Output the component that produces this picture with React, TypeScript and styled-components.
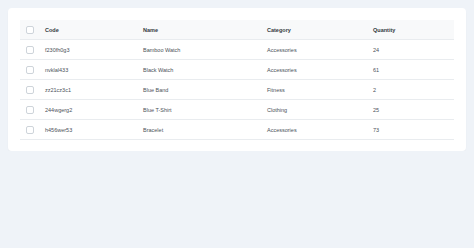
import React, { useState } from 'react'
import styled, { createGlobalStyle } from 'styled-components'

const GlobalStyle = createGlobalStyle`
  html, body {
    margin: 0;
    padding: 0;
    background: #eff3f8;
  }
  body {
    font-family: 'Liberation Sans', Arial, sans-serif;
    -webkit-font-smoothing: antialiased;
  }
`

const Page = styled.div`
  padding: 8px 8px 0 8px;
  width: 474px;
  box-sizing: border-box;
`

const Card = styled.div`
  background: #ffffff;
  border-radius: 4px;
  padding: 12px 12px 11px 12px;
  width: 458px;
  box-sizing: border-box;
  box-shadow: 0 1px 2px rgba(0, 0, 0, 0.03);
`

const Table = styled.table`
  width: 100%;
  border-collapse: collapse;
  table-layout: fixed;
  font-size: 5.5px;
`

const HeadCell = styled.th`
  background: #f8f9fa;
  color: #343a40;
  font-weight: 700;
  text-align: left;
  height: 19px;
  padding: 0 0 0 6px;
  border-bottom: 1px solid #e9ecef;
`

const Cell = styled.td`
  color: #4b5259;
  height: 19px;
  padding: 0 0 0 6px;
  border-bottom: 1px solid #e9ecef;
`

const Box = styled.span<{ $checked?: boolean }>`
  display: block;
  width: 8px;
  height: 8px;
  box-sizing: border-box;
  border: 1px solid #ced4da;
  border-radius: 2px;
  background: ${({ $checked }) => ($checked ? '#6366f1' : '#ffffff')};
  cursor: pointer;
`

type Product = {
  code: string
  name: string
  category: string
  quantity: number
}

const products: Product[] = [
  { code: 'f230fh0g3', name: 'Bamboo Watch', category: 'Accessories', quantity: 24 },
  { code: 'nvklal433', name: 'Black Watch', category: 'Accessories', quantity: 61 },
  { code: 'zz21cz3c1', name: 'Blue Band', category: 'Fitness', quantity: 2 },
  { code: '244wgerg2', name: 'Blue T-Shirt', category: 'Clothing', quantity: 25 },
  { code: 'h456wer53', name: 'Bracelet', category: 'Accessories', quantity: 73 },
]

const App = () => {
  const [selected, setSelected] = useState<string[]>([])

  const toggle = (code: string) => {
    setSelected((prev) => (prev.includes(code) ? prev.filter((c) => c !== code) : [...prev, code]))
  }

  const allSelected = selected.length === products.length

  return (
    <Page>
      <GlobalStyle />
      <Card>
        <Table>
          <colgroup>
            <col style={{ width: 19 }} />
            <col style={{ width: 98 }} />
            <col style={{ width: 124 }} />
            <col style={{ width: 106 }} />
            <col />
          </colgroup>
          <thead>
            <tr>
              <HeadCell>
                <Box
                  $checked={allSelected}
                  onClick={() => setSelected(allSelected ? [] : products.map((p) => p.code))}
                />
              </HeadCell>
              <HeadCell>Code</HeadCell>
              <HeadCell>Name</HeadCell>
              <HeadCell>Category</HeadCell>
              <HeadCell>Quantity</HeadCell>
            </tr>
          </thead>
          <tbody>
            {products.map((product) => (
              <tr key={product.code}>
                <Cell>
                  <Box $checked={selected.includes(product.code)} onClick={() => toggle(product.code)} />
                </Cell>
                <Cell>{product.code}</Cell>
                <Cell>{product.name}</Cell>
                <Cell>{product.category}</Cell>
                <Cell>{product.quantity}</Cell>
              </tr>
            ))}
          </tbody>
        </Table>
      </Card>
    </Page>
  )
}

export default App
